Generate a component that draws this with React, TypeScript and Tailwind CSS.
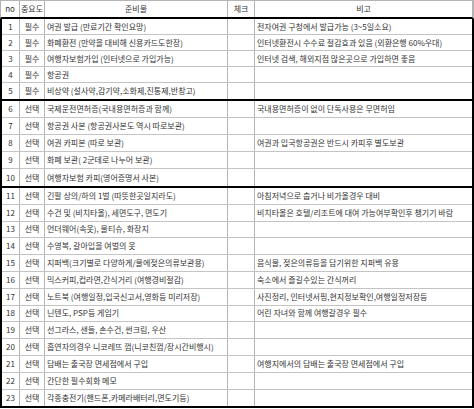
type Item = { no: number; level: string; item: string; note?: string };

const groups: { rowH: string; items: Item[] }[] = [
  {
    rowH: "h-[16px]",
    items: [
      { no: 1, level: "필수", item: "여권 발급 (만료기간 확인요망)", note: "전자여권 구청에서 발급가능 (3~5일소요)" },
      { no: 2, level: "필수", item: "화폐환전 (만약을 대비해 신용카드도한장)", note: "인터넷환전시 수수료 절감효과 있음 (외환은행 60%우대)" },
      { no: 3, level: "필수", item: "여행자보험가입 (인터넷으로 가입가능)", note: "인터넷 검색, 해외지점 많은곳으로 가입하면 좋음" },
      { no: 4, level: "필수", item: "항공권" },
      { no: 5, level: "필수", item: "비상약 (설사약,감기약,소화제,진통제,반창고)" },
    ],
  },
  {
    rowH: "h-[17px]",
    items: [
      { no: 6, level: "선택", item: "국제운전면허증(국내용면허증과 함께)", note: "국내용면허증이 없이 단독사용은 무면허임" },
      { no: 7, level: "선택", item: "항공권 사본 (항공권사본도 역시 따로보관)" },
      { no: 8, level: "선택", item: "여권 카피본 (따로 보관)", note: "여권과 입국항공권은 반드시 카피후 별도보관" },
      { no: 9, level: "선택", item: "화폐 보관( 2군데로 나누어 보관)" },
      { no: 10, level: "선택", item: "여행자보험 카피(영어증명서 사본)" },
    ],
  },
  {
    rowH: "h-[16.8px]",
    items: [
      { no: 11, level: "선택", item: "긴팔 상의/하의 1벌 (따뜻한곳일지라도)", note: "아침저녁으로 춥거나 비가올경우 대비" },
      { no: 12, level: "선택", item: "수건 및 (비치타올), 세면도구, 면도기", note: "비치타올은 호텔/리조트에 대여 가능여부확인후 챙기기 바람" },
      { no: 13, level: "선택", item: "언더웨어(속옷), 물티슈, 화장지" },
      { no: 14, level: "선택", item: "수영복, 갈아입을 여벌의 옷" },
      { no: 15, level: "선택", item: "지퍼백(크기별로 다양하게/물에젖은의류보관용)", note: "음식물, 젖은의류등을 담기위한 지퍼백 유용" },
      { no: 16, level: "선택", item: "믹스커피,컵라면,간식거리 (여행경비절감)", note: "숙소에서 즐길수있는 간식꺼리" },
      { no: 17, level: "선택", item: "노트북 (여행일정,입국신고서,영화등 미리저장)", note: "사진정리, 인터넷서핑,현지정보확인,여행일정저장등" },
      { no: 18, level: "선택", item: "닌텐도, PSP등 게임기", note: "어린 자녀와 함께 여행갈경우 필수" },
      { no: 19, level: "선택", item: "선그라스, 샌들, 손수건, 썬크림, 우산" },
      { no: 20, level: "선택", item: "흡연자의경우 니코레뜨 껌(니코친껌/장시간비행시)" },
      { no: 21, level: "선택", item: "담배는 출국장 면세점에서 구입", note: "여행지에서의 담배는 출국장 면세점에서 구입" },
      { no: 22, level: "선택", item: "간단한 필수회화 메모" },
      { no: 23, level: "선택", item: "각종충전기(핸드폰,카메라배터리,면도기등)" },
    ],
  },
];

const cell = "flex items-center border-r border-[#b4b4b4] overflow-hidden whitespace-nowrap";

export default function App() {
  return (
    <div
      className="w-[474px] h-[409px] bg-white text-[8px] leading-none text-[#333]"
      style={{ fontFamily: '"Noto Sans CJK KR", "Noto Sans", sans-serif' }}
    >
      <div className="grid h-[19px] grid-cols-[19px_25px_183px_27px_1fr] border-l border-t border-r-2 border-[#b4b4b4] border-r-[#b4b4b4] border-b-2 border-b-black">
        <div className={`${cell} justify-center`}>no</div>
        <div className={`${cell} justify-center`}>중요도</div>
        <div className={`${cell} justify-center`}>준비물</div>
        <div className={`${cell} justify-center`}>체크</div>
        <div className="flex items-center justify-center">비고</div>
      </div>
      {groups.map((g, gi) => (
        <div key={`group-${gi}`} className="border-x-2 border-b-2 border-black">
          {g.items.map((r, idx) => (
            <div
              key={`row-${r.no}`}
              className={`grid grid-cols-[18px_25px_183px_27px_1fr] ${g.rowH} ${idx < g.items.length - 1 ? "border-b border-[#c4c4c4]" : ""}`}
            >
              <div className={`${cell} justify-center`}>{r.no}</div>
              <div className={`${cell} justify-center`}>{r.level}</div>
              <div className={`${cell} pl-[2px]`}>{r.item}</div>
              <div className={cell} />
              <div className="flex items-center overflow-hidden whitespace-nowrap pl-[2px]">{r.note}</div>
            </div>
          ))}
        </div>
      ))}
    </div>
  );
}
